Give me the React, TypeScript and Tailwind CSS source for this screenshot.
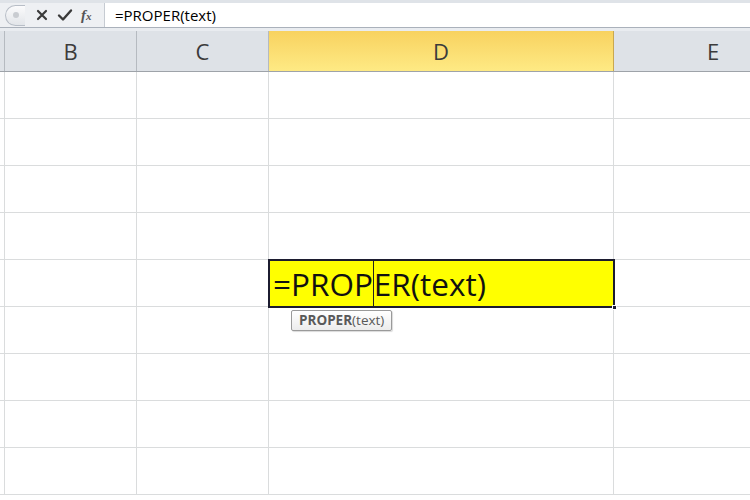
import React from "react";

const font = { fontFamily: '"Open Sans", "Noto Sans", sans-serif' };

function GridRow({ children, h = "h-[47px]" }: { children?: React.ReactNode; h?: string }) {
  return <div className={`flex ${h} shrink-0`}>{children}</div>;
}

function Cell({ w, className = "", children }: { w: string; className?: string; children?: React.ReactNode }) {
  return <div className={`${w} shrink-0 border-r border-b border-[#dadcdd] ${className}`}>{children}</div>;
}

export default function App() {
  const rows = [0, 1, 2, 3, 4, 5, 6, 7, 8];
  return (
    <div className="w-[750px] h-[500px] overflow-hidden bg-white relative" style={font}>
      {/* formula bar */}
      <div className="h-[31px] bg-[#e9ecf0] flex flex-col">
        <div className="h-[3px] bg-[#dfe3e8]" />
        <div className="flex h-[25px] border-b border-[#aab1bb]">
          <div className="w-[104px] flex items-center bg-[#eef0f3]">
            <div className="ml-[5px] w-[20px] h-[21px] rounded-l-full border border-[#b8bec7] border-r-0 bg-gradient-to-b from-[#fbfbfc] to-[#e2e5e9] flex items-center pl-[7px]">
              <div className="w-[6px] h-[6px] rounded-full bg-[#c9ccd1]" />
            </div>
            <svg width="14" height="14" viewBox="0 0 14 14" className="ml-[10px]">
              <path d="M3 3 L11 11 M11 3 L3 11" stroke="#3a3a3a" strokeWidth="2.2" strokeLinecap="round" />
            </svg>
            <svg width="16" height="14" viewBox="0 0 16 14" className="ml-[8px]">
              <path d="M2 7.5 L6 11.5 L14 2.5" stroke="#3a3a3a" strokeWidth="2.4" fill="none" strokeLinecap="round" strokeLinejoin="round" />
            </svg>
            <span className="ml-[8px] text-[15px] italic font-bold text-[#555] leading-none" style={{ fontFamily: '"Liberation Serif", serif' }}>
              f<span className="text-[11px]">x</span>
            </span>
          </div>
          <div className="flex-1 bg-white border-l border-[#c6cbd2] flex items-center pl-[10px] text-[15px] text-black">
            =PROPER(text)
          </div>
        </div>
      </div>
      {/* header row */}
      <div className="flex h-[41px] border-b border-[#9ea3a9] bg-[#dee2e7] text-[22px] text-[#3b3b3b]">
        <div className="w-[5px] shrink-0 border-r border-[#b5bac0]" />
        <div className="w-[132px] shrink-0 border-r border-[#b5bac0] flex items-center justify-center">B</div>
        <div className="w-[132px] shrink-0 border-r border-[#b5bac0] flex items-center justify-center">C</div>
        <div className="w-[345px] shrink-0 border-r border-[#c9a850] bg-gradient-to-b from-[#f8d25f] to-[#feea84] flex items-center justify-center">D</div>
        <div className="flex-1 flex items-center justify-center pl-[62px]">E</div>
      </div>
      {rows.map((r) => (
        <GridRow key={r}>
          <Cell w="w-[5px]" />
          <Cell w="w-[132px]" />
          <Cell w="w-[132px]" />
          <Cell w="w-[345px]" className="relative">
            {r === 4 && (
              <>
                <div className="absolute left-[-1px] top-[-1px] w-[347px] h-[49px] border-2 border-[#1c1c30] bg-[#ffff00] flex items-center pl-[3px] text-[31.5px] text-[#111] z-10">
                  <span>=PROP</span>
                  <span className="w-px self-stretch bg-[#222]" />
                  <span>ER(text)</span>
                  <div className="absolute right-[-4px] bottom-[-4px] w-[5px] h-[5px] bg-[#1c1c30] border border-white" />
                </div>
                <div className="absolute left-[22px] top-[50px] h-[21px] px-[7px] flex items-center rounded-[2px] border border-[#9a9a9a] bg-gradient-to-b from-white to-[#ececec] text-[13.5px] text-[#595959] shadow-[1px_1px_1px_rgba(0,0,0,0.15)] z-20 leading-none">
                  <span className="font-bold">PROPER</span>
                  <span>(text)</span>
                </div>
              </>
            )}
          </Cell>
          <div className="flex-1 border-b border-[#dadcdd]" />
        </GridRow>
      ))}
    </div>
  );
}
